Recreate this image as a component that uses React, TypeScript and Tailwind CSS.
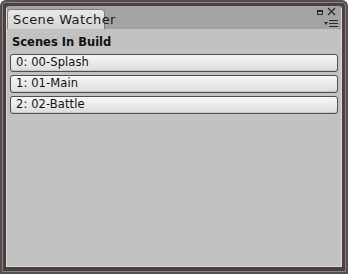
import React from 'react';

const SCENES = ['0: 00-Splash', '1: 01-Main', '2: 02-Battle'];

function WindowIcons() {
  return (
    <div className="flex flex-col items-end pr-[3px] pt-[1px]">
      <div className="flex items-center gap-[4px] pr-[2px]">
        <svg width="6" height="5" viewBox="0 0 6 5" className="mt-[1px]">
          <rect x="0.5" y="0.5" width="5" height="4" fill="none" stroke="#2a2a2a" />
          <rect x="0" y="0" width="6" height="2" fill="#2a2a2a" />
        </svg>
        <svg width="9" height="9" viewBox="0 0 9 9">
          <path d="M1 1 L8 8 M8 1 L1 8" stroke="#2a2a2a" strokeWidth="1.2" />
        </svg>
      </div>
      <svg width="14" height="7" viewBox="0 0 14 7" className="mt-[4px]">
        <path d="M0 2 L4 2 L2 5 Z" fill="#2a2a2a" />
        <rect x="5" y="0" width="9" height="1" fill="#2a2a2a" />
        <rect x="5" y="3" width="9" height="1" fill="#2a2a2a" />
        <rect x="5" y="6" width="9" height="1" fill="#2a2a2a" />
      </svg>
    </div>
  );
}

export default function App() {
  return (
    <div className="w-[348px] h-[274px] bg-[#574b4b] p-[2px] rounded-t-[6px] font-['DejaVu_Sans',sans-serif]">
      <div className="h-full border border-[#8e8383] rounded-t-[4px] bg-[#4b3f3f] px-[3px] pt-[3px] pb-[4px]">
        <div className="h-full flex flex-col border border-t-0 border-[#d9d9d9] rounded-t-[3px] overflow-hidden">
          <div className="h-[23px] bg-[#a3a3a3] flex items-end justify-between">
            <div className="h-[20px] w-[98px] shrink-0 border border-b-0 border-[#7e7e7e] rounded-t-[4px] bg-gradient-to-b from-[#e9e9e9] to-[#d3d3d3] flex items-center pl-[5px] whitespace-nowrap text-[13px] tracking-[0.4px] text-[#1a1a1a]">
              Scene Watcher
            </div>
            <div className="self-start">
              <WindowIcons />
            </div>
          </div>
          <div className="flex-1 bg-[#c2c2c2] px-[3px] pt-[5px]">
            <div className="pl-[2px] h-[16px] leading-[16px] text-[11.5px] font-bold text-[#111]">
              Scenes In Build
            </div>
            <div className="mt-[4px] flex flex-col gap-[3px]">
              {SCENES.map((s) => (
                <div
                  key={s}
                  className="h-[18px] border border-[#4f4f4f] rounded-[3px] bg-gradient-to-b from-[#f7f7f7] to-[#dcdcdc] shadow-[inset_0_-1px_0_#c6c6c6] flex items-center pl-[5px] text-[11.5px] tracking-[0.1px] text-[#111]"
                >
                  {s}
                </div>
              ))}
            </div>
          </div>
        </div>
      </div>
    </div>
  );
}
